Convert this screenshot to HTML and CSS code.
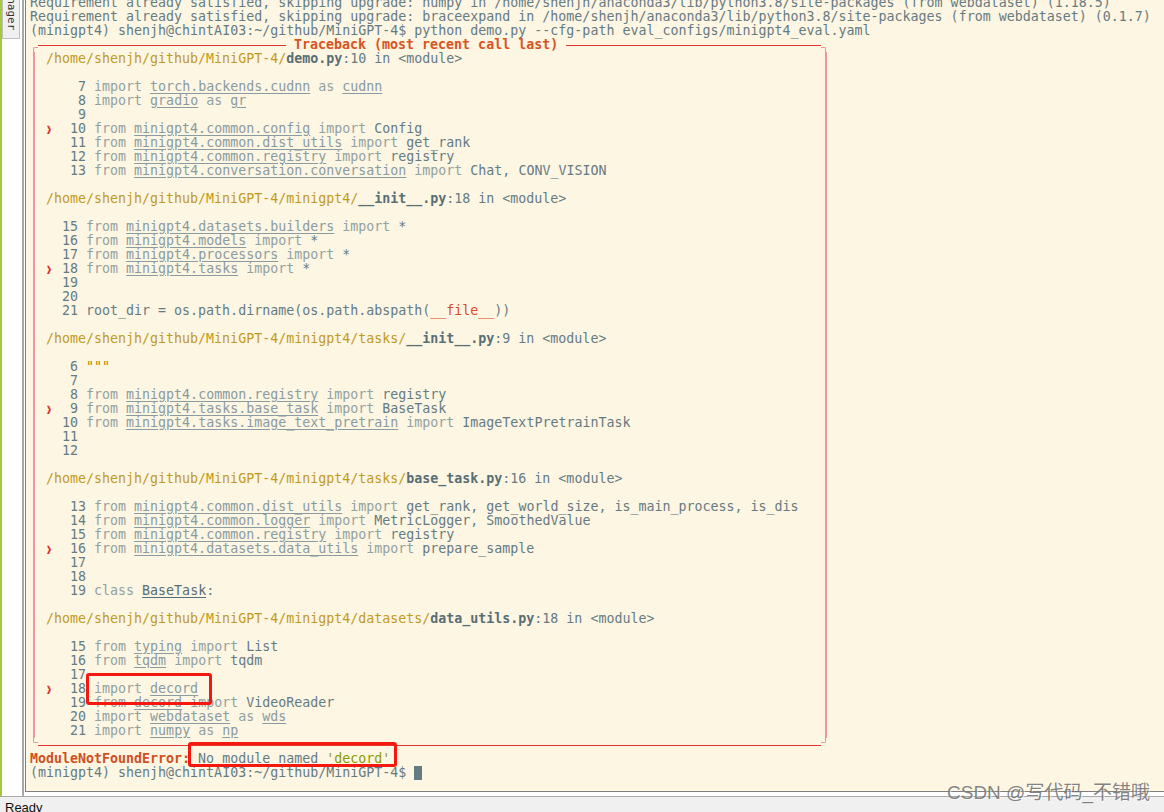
FILE: index.html
```html
<!DOCTYPE html>
<html lang="en">
<head>
<meta charset="utf-8">
<title>Terminal</title>
<link rel="stylesheet" href="styles.css">
</head>
<body>
<div class="screen">
  <div class="main">
    <aside class="side"><div class="tab"><span class="tab-text">Manager</span></div></aside>
    <div class="frame">
      <div class="term">
        <div class="ln">Requirement already satisfied, skipping upgrade: numpy in /home/shenjh/anaconda3/lib/python3.8/site-packages (from webdataset) (1.18.5)</div>
        <div class="ln">Requirement already satisfied, skipping upgrade: braceexpand in /home/shenjh/anaconda3/lib/python3.8/site-packages (from webdataset) (0.1.7)</div>
        <div class="ln">(minigpt4) shenjh@chintAI03:~/github/MiniGPT-4$ python demo.py --cfg-path eval_configs/minigpt4_eval.yaml</div>
        <div class="panel-head"><i class="corner"></i><i class="rule rule-l"></i><b class="title">Traceback (most recent call last)</b><i class="rule rule-r"></i><i class="corner corner-r"></i></div>
        <div class="panel">
          <div class="ln"><span class="path">/home/shenjh/github/MiniGPT-4/</span><b class="file">demo.py</b>:10 in &lt;module&gt;</div>
          <div class="ln"></div>
          <div class="ln">    7 <span class="kw">import</span> <u>torch.backends.cudnn</u> <span class="kw">as</span> <u>cudnn</u></div>
          <div class="ln">    8 <span class="kw">import</span> <u>gradio</u> <span class="kw">as</span> <u>gr</u></div>
          <div class="ln">    9</div>
          <div class="ln"><span class="arrow">❱</span>  10 <span class="kw">from</span> <u>minigpt4.common.config</u> <span class="kw">import</span> Config</div>
          <div class="ln">   11 <span class="kw">from</span> <u>minigpt4.common.dist_utils</u> <span class="kw">import</span> get_rank</div>
          <div class="ln">   12 <span class="kw">from</span> <u>minigpt4.common.registry</u> <span class="kw">import</span> registry</div>
          <div class="ln">   13 <span class="kw">from</span> <u>minigpt4.conversation.conversation</u> <span class="kw">import</span> Chat, CONV_VISION</div>
          <div class="ln"></div>
          <div class="ln"><span class="path">/home/shenjh/github/MiniGPT-4/minigpt4/</span><b class="file">__init__.py</b>:18 in &lt;module&gt;</div>
          <div class="ln"></div>
          <div class="ln">  15 <span class="kw">from</span> <u>minigpt4.datasets.builders</u> <span class="kw">import</span> *</div>
          <div class="ln">  16 <span class="kw">from</span> <u>minigpt4.models</u> <span class="kw">import</span> *</div>
          <div class="ln">  17 <span class="kw">from</span> <u>minigpt4.processors</u> <span class="kw">import</span> *</div>
          <div class="ln"><span class="arrow">❱</span> 18 <span class="kw">from</span> <u>minigpt4.tasks</u> <span class="kw">import</span> *</div>
          <div class="ln">  19</div>
          <div class="ln">  20</div>
          <div class="ln">  21 root_dir = os.path.dirname(os.path.abspath(<span class="dunder">__file__</span>))</div>
          <div class="ln"></div>
          <div class="ln"><span class="path">/home/shenjh/github/MiniGPT-4/minigpt4/tasks/</span><b class="file">__init__.py</b>:9 in &lt;module&gt;</div>
          <div class="ln"></div>
          <div class="ln">   6 <span class="str">"""</span></div>
          <div class="ln">   7</div>
          <div class="ln">   8 <span class="kw">from</span> <u>minigpt4.common.registry</u> <span class="kw">import</span> registry</div>
          <div class="ln"><span class="arrow">❱</span>  9 <span class="kw">from</span> <u>minigpt4.tasks.base_task</u> <span class="kw">import</span> BaseTask</div>
          <div class="ln">  10 <span class="kw">from</span> <u>minigpt4.tasks.image_text_pretrain</u> <span class="kw">import</span> ImageTextPretrainTask</div>
          <div class="ln">  11</div>
          <div class="ln">  12</div>
          <div class="ln"></div>
          <div class="ln"><span class="path">/home/shenjh/github/MiniGPT-4/minigpt4/tasks/</span><b class="file">base_task.py</b>:16 in &lt;module&gt;</div>
          <div class="ln"></div>
          <div class="ln">   13 <span class="kw">from</span> <u>minigpt4.common.dist_utils</u> <span class="kw">import</span> get_rank, get_world_size, is_main_process, is_dis</div>
          <div class="ln">   14 <span class="kw">from</span> <u>minigpt4.common.logger</u> <span class="kw">import</span> MetricLogger, SmoothedValue</div>
          <div class="ln">   15 <span class="kw">from</span> <u>minigpt4.common.registry</u> <span class="kw">import</span> registry</div>
          <div class="ln"><span class="arrow">❱</span>  16 <span class="kw">from</span> <u>minigpt4.datasets.data_utils</u> <span class="kw">import</span> prepare_sample</div>
          <div class="ln">   17</div>
          <div class="ln">   18</div>
          <div class="ln">   19 <span class="kw">class</span> <u class="cls">BaseTask</u>:</div>
          <div class="ln"></div>
          <div class="ln"><span class="path">/home/shenjh/github/MiniGPT-4/minigpt4/datasets/</span><b class="file">data_utils.py</b>:18 in &lt;module&gt;</div>
          <div class="ln"></div>
          <div class="ln">   15 <span class="kw">from</span> <u>typing</u> <span class="kw">import</span> List</div>
          <div class="ln">   16 <span class="kw">from</span> <u>tqdm</u> <span class="kw">import</span> tqdm</div>
          <div class="ln">   17</div>
          <div class="ln"><span class="arrow">❱</span>  18 <span class="kw">import</span> <u>decord</u></div>
          <div class="ln">   19 <span class="kw">from</span> <u>decord</u> <span class="kw">import</span> VideoReader</div>
          <div class="ln">   20 <span class="kw">import</span> <u>webdataset</u> <span class="kw">as</span> <u>wds</u></div>
          <div class="ln">   21 <span class="kw">import</span> <u>numpy</u> <span class="kw">as</span> <u>np</u></div>
        </div>
        <div class="panel-foot"><i class="corner corner-b"></i><i class="rule rule-f"></i><i class="corner corner-br"></i></div>
        <div class="ln"><b class="err">ModuleNotFoundError:</b> No module named <span class="lit">'decord'</span></div>
        <div class="ln">(minigpt4) shenjh@chintAI03:~/github/MiniGPT-4$ <span class="cursor"> </span></div>
      </div>
    </div>
  </div>
  <footer class="status">Ready</footer>
  <div class="mark mark-a"></div>
  <div class="mark mark-b"></div>
  <div class="watermark">CSDN @写代码_不错哦</div>
</div>
</body>
</html>
```

FILE: styles.css
```css
* { box-sizing: border-box; }
html, body { margin: 0; padding: 0; }
.screen {
  position: relative;
  width: 1164px;
  height: 812px;
  overflow: hidden;
  display: flex;
  flex-direction: column;
  background: #f0f0f0;
}
.main { flex: 0 0 797px; display: flex; border-bottom: 1px solid #a8a8a8; }
.side {
  flex: 0 0 22px;
  background: #fff;
  border-left: 2px solid #a4c93c;
  overflow: hidden;
}
.tab {
  width: 18px;
  height: 39px;
  background: #f0f0f0;
  border: 1px solid #c0c0c0;
  border-top: 0;
  display: flex;
  align-items: flex-end;
  justify-content: center;
  overflow: hidden;
}
.tab-text {
  writing-mode: vertical-rl;
  font: 11px "DejaVu Sans Mono", monospace;
  color: #333;
  line-height: 14px;
  padding-bottom: 8px;
}
.frame {
  flex: 1;
  border-left: 2px solid #a8a8a8;
  padding-left: 1px;
  background: #fff;
  min-width: 0;
  padding-bottom: 4px;
}
.term {
  height: 100%;
  border-left: 1px solid #808080;
  border-bottom: 1px solid #808080;
  background: #fdf6e3;
  padding-left: 4px;
  overflow: hidden;
  font: 13.3px/14px "DejaVu Sans Mono", monospace;
  color: #657b83;
}
.term > .ln:first-child { margin-top: -4px; }
.ln { height: 14px; white-space: pre; }
.panel-head, .panel-foot { height: 14px; display: flex; align-items: center; width: 796px; }
.panel {
  width: 794px;
  margin-left: 3px;
  border-left: 2px solid #f094a8;
  border-right: 2px solid #f094a8;
  padding-left: 11px;
}
.corner {
  width: 5px;
  height: 5px;
  margin-left: 3px;
  border-left: 1px solid #ee8fa0;
  border-top: 1px solid #ee8fa0;
  border-top-left-radius: 2px;
  align-self: flex-end;
}
.corner-r { margin-left: 0; border-left: 0; border-right: 1px solid #ee8fa0; border-radius: 0 2px 0 0; }
.corner-b { align-self: flex-start; border-top: 0; border-bottom: 1px solid #ee8fa0; border-radius: 0 0 0 2px; }
.corner-br { align-self: flex-start; margin-left: 0; border-top: 0; border-left: 0; border-right: 1px solid #ee8fa0; border-bottom: 1px solid #ee8fa0; border-radius: 0 0 2px 0; }
.rule { display: block; height: 1px; background: #e8352c; }
.rule-l { width: 248px; }
.rule-r { flex: 1; }
.rule-f { flex: 1; }
.title { margin: 0 8px; color: #d9531e; font-weight: bold; white-space: pre; }
.path { color: #c29a1c; }
.file { color: #586e75; font-weight: bold; }
.kw { color: #93a1a1; }
u { color: #8a9ba1; text-decoration: underline; text-underline-offset: 2px; }
.cls { color: #586e75; }
.dunder { color: #dc4c24; }
.str { color: #b58900; }
.arrow { display: inline-block; width: 8px; font-size: 10px; font-weight: bold; color: #dc322f; }
.err { color: #d0501e; font-weight: bold; }
.lit { color: #8a9a00; }
.cursor { display: inline-block; width: 8px; height: 14px; background: #657b83; vertical-align: top; }
.status {
  flex: 1;
  padding: 3px 0 0 5px;
  font: 13px/16px "Liberation Sans", sans-serif;
  color: #111;
}
.mark {
  position: absolute;
  border: 3px solid #f5180f;
  border-radius: 3px;
}
.mark-a { left: 86px; top: 673px; width: 126px; height: 32px; }
.mark-b { left: 188px; top: 742px; width: 209px; height: 25px; }
.watermark {
  position: absolute;
  left: 947px;
  top: 782px;
  font: 19px/22px "Liberation Sans", "Noto Sans CJK SC", sans-serif;
  color: rgba(110, 110, 110, 0.85);
  text-shadow: 1px 1px 0 rgba(255, 255, 255, 0.6);
  white-space: nowrap;
}
```
